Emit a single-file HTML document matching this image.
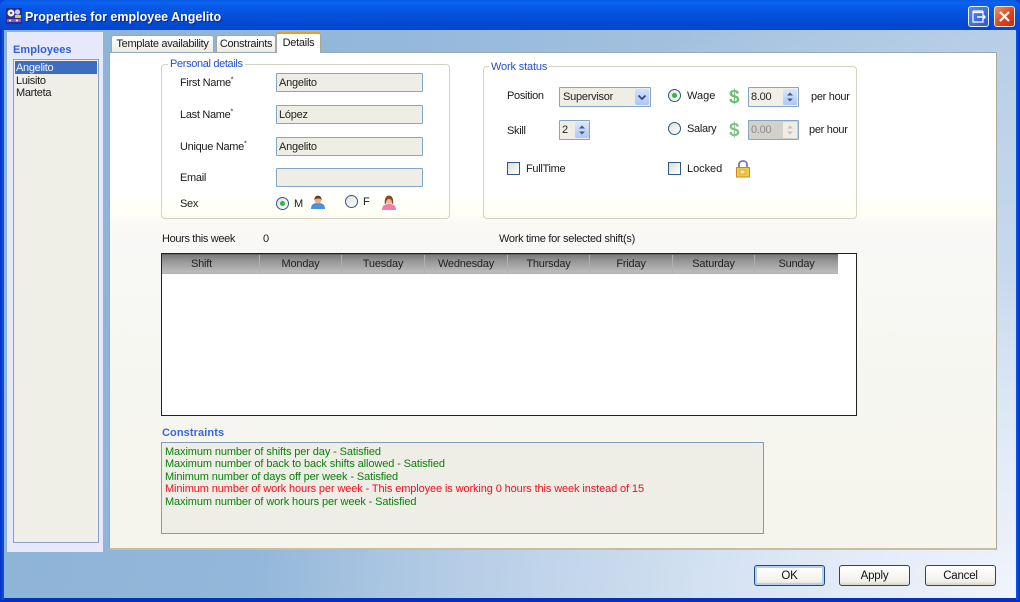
<!DOCTYPE html>
<html><head><meta charset="utf-8"><style>
*{box-sizing:border-box}
html,body{margin:0;padding:0}
body{width:1020px;height:602px;position:relative;overflow:hidden;background:#0a3fd8;font:11px "Liberation Sans",sans-serif;color:#111}
.a{position:absolute}
.t{position:absolute;white-space:nowrap;font-size:11px;line-height:13px;color:#1a1a1a;margin-top:1px;letter-spacing:-.3px}
.inp{position:absolute;background:#eeede6;border:1px solid #85a5c5;border-radius:1px;font-size:11px;line-height:18px;padding-left:2px;color:#222;letter-spacing:-.25px}
.group{position:absolute;border:1px solid #d3d3bf;border-radius:4px}
.legend{position:absolute;font-size:11px;line-height:13px;color:#1f50d0;padding:0 2px;white-space:nowrap;letter-spacing:-.35px;margin-top:1px}
.radio{position:absolute;width:13px;height:13px;border-radius:50%;border:1px solid #2f5a85;background:linear-gradient(135deg,#e0dfd8,#fff)}
.radio.on:after{content:"";position:absolute;left:3px;top:3px;width:5px;height:5px;border-radius:50%;background:#35b34a}
.check{position:absolute;width:13px;height:13px;border:1px solid #2f5a85;background:linear-gradient(135deg,#dcdcd4,#fff)}
.spin{position:absolute;width:14px;border-radius:1px;background:linear-gradient(#dbe6fb,#b0c8f5)}
.btn{position:absolute;top:565px;width:71px;height:21px;border:1px solid #1f4a78;border-radius:3px;background:linear-gradient(#fff,#f2f1ea 80%,#d8d6ca);text-align:center;font-size:11.5px;line-height:20px;color:#111;letter-spacing:-.2px}
.hd{position:absolute;top:255px;height:19px;text-align:center;font-size:11px;line-height:18px;color:#222;border-right:1px solid #b0b0b0;letter-spacing:-.2px}
.tab{position:absolute;font-size:11px;text-align:center;color:#1a1a1a;border:1px solid #a5a99a;border-bottom:none;border-radius:3px 3px 0 0;background:linear-gradient(#fff,#ecebe3);letter-spacing:-.3px}
.c{position:absolute;left:165px;font-size:11px;line-height:13px;color:#0a800a;white-space:nowrap;letter-spacing:-.11px;margin-top:1px}
</style></head><body>
<!-- title bar -->
<div class="a" style="left:0;top:0;width:1020px;height:30px;border-radius:7px 7px 0 0;background:linear-gradient(#0a5ae0 0,#0a62f2 3px,#0758e4 8px,#0349d0 24px,#0546d0 30px)"></div>
<svg class="a" style="left:6px;top:8px" width="16" height="16" viewBox="0 0 16 16">
<rect x="0" y="0" width="16" height="16" fill="#2a2a90"/>
<circle cx="5" cy="5" r="3.5" fill="#f2f2f2"/><circle cx="5" cy="5" r="1.2" fill="#555"/>
<circle cx="11.5" cy="4" r="2.6" fill="#c8c8f0"/><rect x="9" y="7" width="6" height="3" fill="#d8d040"/>
<rect x="1" y="11" width="14" height="3" fill="#8060c0"/><circle cx="4" cy="12.5" r="1" fill="#fff"/><circle cx="11" cy="12.5" r="1" fill="#fff"/>
</svg>
<div class="t" style="left:25px;top:8px;font-size:12.5px;line-height:16px;font-weight:bold;color:#fff;letter-spacing:0;text-shadow:1px 1px 0 #0a2a90">Properties for employee Angelito</div>
<!-- title buttons -->
<div class="a" style="left:968px;top:6px;width:21px;height:21px;border:1px solid #e8f0ff;border-radius:3px;background:linear-gradient(135deg,#5a86ee,#2a5ad0)">
<svg width="19" height="19" viewBox="0 0 19 19"><path d="M4 4h10M4 5.500h10M4 4v11h10v-3M14 4v3" fill="none" stroke="#fff" stroke-width="1.200"/><path d="M8 10h8M13.500 7.500l2.500 2.500-2.500 2.500" fill="none" stroke="#fff" stroke-width="1.500"/></svg></div>
<div class="a" style="left:994px;top:6px;width:21px;height:21px;border:1px solid #f0e8e0;border-radius:3px;background:linear-gradient(135deg,#ee9070,#d8401a 60%,#c03010)">
<svg width="19" height="19" viewBox="0 0 19 19"><path d="M5 5l9 9M14 5l-9 9" stroke="#fff" stroke-width="2.200"/></svg></div>
<!-- client -->
<div class="a" style="left:4px;top:30px;width:1012px;height:568px;background:radial-gradient(ellipse 760px 620px at 100% 100%,#f0f4fc 0%,#dfe9f6 28%,#c6d8ec 55%,rgba(160,190,220,0) 100%),linear-gradient(100deg,#8cb2d6 0%,#94b8da 35%,#a8c4e0 70%,#b8d0e8 100%)"></div>
<!-- left panel -->
<div class="a" style="left:7px;top:32px;width:96px;height:520px;background:#e8e8fd"></div>
<div class="t" style="left:13px;top:43px;font-weight:bold;color:#2f5fd8;font-size:11px;letter-spacing:.05px">Employees</div>
<div class="a" style="left:13px;top:59px;width:86px;height:484px;background:#efeee7;border:1px solid #86a3bd"></div>
<div class="a" style="left:15px;top:61px;width:82px;height:13px;background:#3d6cc0"></div>
<div class="t" style="left:16px;top:61px;color:#f4f6ff">Angelito</div>
<div class="t" style="left:16px;top:74px">Luisito</div>
<div class="t" style="left:16px;top:86px">Marteta</div>
<!-- tab page -->
<div class="a" style="left:109px;top:52px;width:888px;height:498px;border:1px solid #97a9b8;border-right-color:#aaa89c;border-bottom:2px solid #c5bda5;background:linear-gradient(#fff 0,#fff 135px,#fffffa 150px,#fffff6 160px,#fbf9f6 170px,#f8f8f6 190px,#f6f6f0 350px,#f5f5ec 100%)"></div>
<div class="tab" style="left:111px;top:35px;width:103px;height:17px;line-height:17px">Template availability</div>
<div class="tab" style="left:216px;top:35px;width:60px;height:17px;line-height:17px">Constraints</div>
<div class="a" style="left:276px;top:32px;width:45px;height:21px;background:#fff;border:1px solid #a5a99a;border-top:2px solid #e8a020;border-bottom:none;border-radius:3px 3px 0 0;text-align:center;line-height:18px;font-size:11px;color:#1a1a1a;letter-spacing:-.25px">Details</div>
<!-- personal details -->
<div class="group" style="left:161px;top:64px;width:289px;height:155px"></div>
<div class="legend" style="left:168px;top:57px;background:#fff">Personal details</div>
<div class="t" style="left:180px;top:76px">First Name<sup style="font-size:7px;line-height:0">*</sup></div>
<div class="t" style="left:180px;top:108px">Last Name<sup style="font-size:7px;line-height:0">*</sup></div>
<div class="t" style="left:180px;top:140px">Unique Name<sup style="font-size:7px;line-height:0">*</sup></div>
<div class="t" style="left:180px;top:171px">Email</div>
<div class="t" style="left:180px;top:197px">Sex</div>
<div class="inp" style="left:276px;top:73px;width:147px;height:19px">Angelito</div>
<div class="inp" style="left:276px;top:105px;width:147px;height:19px">López</div>
<div class="inp" style="left:276px;top:137px;width:147px;height:19px">Angelito</div>
<div class="inp" style="left:276px;top:168px;width:147px;height:19px"></div>
<div class="radio on" style="left:276px;top:197px"></div>
<div class="t" style="left:294px;top:197px">M</div>
<svg class="a" style="left:310px;top:195px" width="16" height="15" viewBox="0 0 16 15"><path d="M1 14c0-5 3-6 7-6s7 1 7 6z" fill="#4a8fe0"/><circle cx="8" cy="5" r="3.600" fill="#e8b088"/><path d="M4.400 5c0-3 1.600-4.400 3.600-4.400s3.600 1.400 3.600 4.400c-1-2-6-2-7.200 0z" fill="#6a3a20"/></svg>
<div class="radio" style="left:345px;top:195px"></div>
<div class="t" style="left:363px;top:195px">F</div>
<svg class="a" style="left:381px;top:195px" width="16" height="16" viewBox="0 0 16 16"><path d="M1 15c0-5 3-6 7-6s7 1 7 6z" fill="#ee80a8"/><circle cx="8" cy="5.500" r="3.400" fill="#eebb98"/><path d="M3.800 9c-.5-6 1.500-8.500 4.200-8.500s4.700 2.500 4.200 8.500l-1.400-.5c.3-3-1-4.500-2.800-4.500s-3.100 1.500-2.800 4.500z" fill="#8a4a28"/></svg>
<!-- work status -->
<div class="group" style="left:483px;top:66px;width:374px;height:153px"></div>
<div class="legend" style="left:489px;top:60px;background:#fff;letter-spacing:-.15px">Work status</div>
<div class="t" style="left:507px;top:89px">Position</div>
<div class="t" style="left:507px;top:124px">Skill</div>
<div class="inp" style="left:559px;top:87px;width:92px;height:20px;padding-left:3px">Supervisor</div>
<div class="spin" style="left:635px;top:89px;height:16px;background:linear-gradient(#d4e0fa,#aec6f5);border-radius:2px"><svg width="14" height="16"><path d="M3.500 6.500l3.500 3.500 3.500-3.500" fill="none" stroke="#2d4d80" stroke-width="1.800"/></svg></div>
<div class="inp" style="left:559px;top:120px;width:31px;height:20px">2</div>
<div class="spin" style="left:575px;top:122px;height:16px"><svg width="14" height="16"><path d="M4 6.500l3-3 3 3z" fill="#3a5a88"/><path d="M4 9.500l3 3 3-3z" fill="#3a5a88"/></svg></div>
<div class="check" style="left:507px;top:162px"></div>
<div class="t" style="left:526px;top:162px">FullTime</div>
<div class="radio on" style="left:668px;top:89px"></div>
<div class="t" style="left:687px;top:89px;letter-spacing:0">Wage</div>
<div class="t" style="left:729px;top:87px;font-size:19px;line-height:20px;font-weight:bold;color:#6fbb78;letter-spacing:0">$</div>
<div class="inp" style="left:748px;top:87px;width:51px;height:20px;background:#f0efe8">8.00</div>
<div class="spin" style="left:783px;top:89px;height:16px"><svg width="14" height="16"><path d="M4 6.500l3-3 3 3z" fill="#3a5a88"/><path d="M4 9.500l3 3 3-3z" fill="#3a5a88"/></svg></div>
<div class="t" style="left:811px;top:90px">per hour</div>
<div class="radio" style="left:668px;top:122px"></div>
<div class="t" style="left:687px;top:122px">Salary</div>
<div class="t" style="left:729px;top:120px;font-size:19px;line-height:20px;font-weight:bold;color:#7fc088;letter-spacing:0">$</div>
<div class="inp" style="left:748px;top:120px;width:51px;height:20px;background:#d2d1ca;color:#8c8c86">0.00</div>
<div class="spin" style="left:783px;top:122px;height:16px;background:#eeede6"><svg width="14" height="16"><path d="M4 6.500l3-3 3 3z" fill="#c2c2ba"/><path d="M4 9.500l3 3 3-3z" fill="#c2c2ba"/></svg></div>
<div class="t" style="left:809px;top:123px">per hour</div>
<div class="check" style="left:668px;top:162px"></div>
<div class="t" style="left:687px;top:162px;letter-spacing:-.05px">Locked</div>
<svg class="a" style="left:735px;top:160px" width="16" height="18" viewBox="0 0 16 18"><path d="M4 8V4.500C4 2 6 1 8 1s4 1 4 3.500V7" fill="none" stroke="#7a7ab0" stroke-width="1.800"/><rect x="1.500" y="7.500" width="13" height="9.500" fill="#f6c840" stroke="#c88a20"/><rect x="5" y="10" width="5" height="4" fill="#fdf0a8" stroke="#d89a30" stroke-width=".8"/></svg>
<!-- hours -->
<div class="t" style="left:162px;top:232px;letter-spacing:-.35px">Hours this week</div>
<div class="t" style="left:263px;top:232px">0</div>
<div class="t" style="left:499px;top:232px">Work time for selected shift(s)</div>
<!-- grid -->
<div class="a" style="left:161px;top:253px;width:696px;height:163px;background:#fff;border:1px solid #222"></div>
<div class="a" style="left:162px;top:254px;width:676px;height:20px;background:linear-gradient(#7c7c7c,#989898 35%,#bcbcbc 90%,#b0b0b0);border-top:1px solid #666"></div>
<div class="hd" style="left:162px;width:98px;padding-right:18px">Shift</div>
<div class="hd" style="left:260px;width:82px">Monday</div>
<div class="hd" style="left:342px;width:83px">Tuesday</div>
<div class="hd" style="left:425px;width:83px">Wednesday</div>
<div class="hd" style="left:508px;width:82px">Thursday</div>
<div class="hd" style="left:590px;width:83px">Friday</div>
<div class="hd" style="left:673px;width:82px">Saturday</div>
<div class="hd" style="left:755px;width:83px;border-right:none">Sunday</div>
<!-- constraints -->
<div class="t" style="left:162px;top:426px;font-weight:bold;color:#3a66e0;letter-spacing:.1px">Constraints</div>
<div class="a" style="left:161px;top:442px;width:603px;height:92px;background:#eeede6;border:1px solid #7f9db9"></div>
<div class="c" style="top:445px">Maximum number of shifts per day - Satisfied</div>
<div class="c" style="top:457px">Maximum number of back to back shifts allowed - Satisfied</div>
<div class="c" style="top:470px">Minimum number of days off per week - Satisfied</div>
<div class="c" style="top:482px;color:#f01020">Minimum number of work hours per week - This employee is working 0 hours this week instead of 15</div>
<div class="c" style="top:495px">Maximum number of work hours per week - Satisfied</div>
<!-- buttons -->
<div class="btn" style="left:754px;box-shadow:inset 0 0 0 2px #b8d0f0">OK</div>
<div class="btn" style="left:839px">Apply</div>
<div class="btn" style="left:925px">Cancel</div>
<!-- frame bottom -->
<div class="a" style="left:0;top:598px;width:1020px;height:4px;background:#0331b8"></div>
<div class="a" style="left:0;top:30px;width:4px;height:570px;background:linear-gradient(90deg,#0331c0,#0a55ea)"></div>
<div class="a" style="left:1016px;top:30px;width:4px;height:570px;background:linear-gradient(90deg,#0a55ea,#0331c0)"></div>
</body></html>
